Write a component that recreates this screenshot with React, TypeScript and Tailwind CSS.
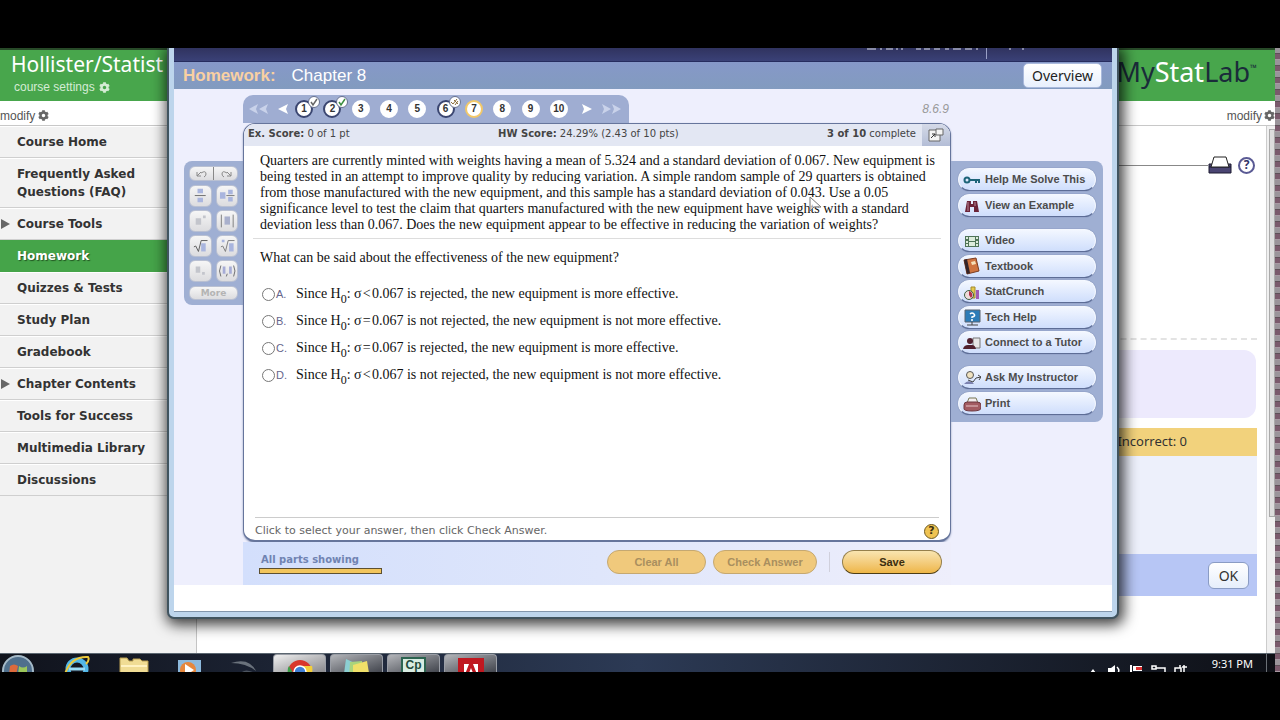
import type { ReactNode } from "react";
import clsx from "clsx";
import { FaCog } from "react-icons/fa";

const courseLinks = [
  { label: "Course Home" },
  { label: "Frequently Asked Questions (FAQ)", tall: true },
  { label: "Course Tools", arrow: true },
  { label: "Homework", active: true },
  { label: "Quizzes & Tests" },
  { label: "Study Plan" },
  { label: "Gradebook" },
  { label: "Chapter Contents", arrow: true },
  { label: "Tools for Success" },
  { label: "Multimedia Library" },
  { label: "Discussions" },
];

const problemLines = [
  "Quarters are currently minted with weights having a mean of 5.324 and a standard deviation of 0.067. New equipment is",
  "being tested in an attempt to improve quality by reducing variation. A simple random sample of 29 quarters is obtained",
  "from those manufactured with the new equipment, and this sample has a standard deviation of 0.043. Use a 0.05",
  "significance level to test the claim that quarters manufactured with the new equipment have weights with a standard",
  "deviation less than 0.067. Does the new equipment appear to be effective in reducing the variation of weights?",
];

const answers = [
  { id: "A", sign: "<", rest: "is rejected, the new equipment is more effective." },
  { id: "B", sign: "=", rest: "is not rejected, the new equipment is not more effective." },
  { id: "C", sign: "=", rest: "is rejected, the new equipment is more effective." },
  { id: "D", sign: "<", rest: "is not rejected, the new equipment is not more effective." },
];

const questions = [
  { n: 1, mark: "check" },
  { n: 2, mark: "check" },
  { n: 3 },
  { n: 4 },
  { n: 5 },
  { n: 6, mark: "partial" },
  { n: 7, current: true },
  { n: 8 },
  { n: 9 },
  { n: 10 },
];

function CourseSidebar() {
  return (
    <aside className="w-[197px] shrink-0 flex flex-col bg-[#f2f2f2] border-r border-[#c4c4c4]">
      <div className="h-[25px] pt-[5px] bg-white border-b border-[#c8c8c8] flex items-center text-[12px] text-[#555] font-['Liberation_Sans',sans-serif]">
        modify
        <FaCog className="ml-[3px] text-[#666]" size={11} />
      </div>
      <nav className="font-['DejaVu_Sans',sans-serif]">
        {courseLinks.map((link) => (
          <a
            key={link.label}
            href="#"
            className={clsx(
              "relative flex items-center pl-[17px] pr-[50px] border-b text-[12px] leading-[18px] font-bold",
              link.tall ? "h-[50px]" : "h-8",
              link.active
                ? "bg-[#45a449] text-white border-[#45a449] [text-shadow:1px_1px_1px_#225522]"
                : "text-[#333] border-[#cfcfcf] border-t border-t-white",
              !link.tall && "whitespace-nowrap"
            )}
          >
            {link.arrow && (
              <svg className="absolute left-[1px]" width="10" height="12" viewBox="0 0 10 12">
                <path d="M0 1l9 5-9 5z" fill="#666" />
              </svg>
            )}
            {link.label}
          </a>
        ))}
      </nav>
    </aside>
  );
}

function ResultsPage() {
  return (
    <main className="flex-1 bg-white flex flex-col font-['Noto_Sans',sans-serif]">
      <div className="h-[25px] pt-[5px] border-b border-[#c8c8c8] flex items-center justify-end text-[12px] text-[#555] font-['Liberation_Sans',sans-serif]">
        modify
        <FaCog className="ml-[2px] text-[#666]" size={11} />
      </div>
      <div className="flex-1 flex">
        <div className="flex-1 flex flex-col pr-[9px]">
          <div className="h-[214px] border-b-2 border-dashed border-[#e3e3e3] pt-[30px]">
            <div className="flex items-center gap-[6px]">
              <span className="flex-1 h-px bg-[#888]" />
              <svg width="24" height="18" viewBox="0 0 24 18" className="-ml-[6px]">
                <path d="M1 8h22v9H1z" fill="#4a4572" stroke="#1c1a30" />
                <path d="M1 11h22" stroke="#1c1a30" />
                <path d="M6 1h12l3 10H3z" fill="#fff" stroke="#222" />
              </svg>
              <button className="w-[17px] h-[17px] mr-[2px] rounded-full border-2 border-[#5a5a94] bg-white text-[12px] leading-[12px] font-bold text-[#333366]">
                ?
              </button>
            </div>
          </div>
          <div className="h-[68px] mt-[10px] mr-px bg-[#edeafd] rounded-xl" />
          <div className="h-7 mt-[10px] pr-[70px] bg-[#f2d27c] flex items-center justify-end text-[13px] text-[#333]">
            Incorrect: 0
          </div>
          <div className="h-[98px] bg-[#edf0fb]" />
          <div className="h-[42px] pr-2 bg-[#b7c6f5] flex items-center justify-end">
            <button className="w-[41px] h-[27px] rounded-[6px] border border-[#8a9cc4] bg-linear-to-b from-white to-[#e6eefb] text-[14px] text-[#333]">
              OK
            </button>
          </div>
        </div>
        <div className="w-[9px] border-l border-[#ccc] bg-[#f0f0f0] pt-[3px] pl-[2px]">
          <div className="h-[388px] border border-[#aaa] bg-[#dcdcdc]" />
        </div>
      </div>
    </main>
  );
}

const mathKeys: { label: string; art: ReactNode }[] = [
  {
    label: "Fraction",
    art: (
      <>
        <path d="M8 3h6v5H8zM8 13h6v5H8z" fill="#a9b5de" />
        <path d="M5 10.500h12" stroke="#666" />
      </>
    ),
  },
  {
    label: "Mixed number",
    art: (
      <>
        <path d="M3 7h6v7H3zM12 4h5v5h-5zM12 12h5v5h-5z" fill="#a9b5de" />
        <path d="M10 10.500h9" stroke="#777" />
      </>
    ),
  },
  { label: "Exponent", art: <path d="M6 8h6v7H6zM14 5h3v3h-3z" fill="#c3c5cc" /> },
  {
    label: "Absolute value",
    art: (
      <>
        <path d="M8 6h6v9H8z" fill="#a9b0cc" />
        <path d="M4.500 4v14M17.500 4v14" stroke="#777" />
      </>
    ),
  },
  {
    label: "Square root",
    art: (
      <>
        <path d="M12 8h5v9h-5z" fill="#a9b5de" />
        <path d="M4 12l2-1 3 6 3-12h7" stroke="#555" fill="none" />
      </>
    ),
  },
  {
    label: "Root",
    art: (
      <>
        <path d="M13 8h5v9h-5zM5 4h3v3H5z" fill="#a9b5de" />
        <path d="M4 12l2-1 3 6 3-12h7" stroke="#777" fill="none" />
      </>
    ),
  },
  { label: "Subscript", art: <path d="M6 6h5v7H6zM13 12h3v3h-3z" fill="#c3c5cc" /> },
  {
    label: "Ordered pair",
    art: (
      <>
        <path d="M6 6h3v8H6zM13 6h3v8h-3z" fill="#a6acd6" />
        <path d="M4 5q-3 6 0 12M18 5q3 6 0 12M11 14l-1 3" stroke="#666" fill="none" />
      </>
    ),
  },
];

const keyStyle = "border border-[#b9c0d2] bg-linear-to-b from-[#f6f6f6] to-[#dcdcdf]";

function MathPalette() {
  return (
    <div className="mt-[72px] ml-[10px] p-[5px] bg-[#9fafd3] rounded-l-lg flex flex-col gap-1">
      <div className={clsx("h-[15px] rounded-md flex", keyStyle)}>
        <button aria-label="Undo" className="flex-1 flex items-center justify-center border-r border-[#888]">
          <svg width="14" height="8" viewBox="0 0 14 8" fill="none" stroke="#888">
            <path d="M2 2v4h4M2 6l4-4M6 3q5-3 5 1 0 2-2 3" />
          </svg>
        </button>
        <button aria-label="Redo" className="flex-1 flex items-center justify-center">
          <svg width="14" height="8" viewBox="0 0 14 8" fill="none" stroke="#888">
            <path d="M12 2v4H8M12 6L8 2M8 3Q3 0 3 4q0 2 2 3" />
          </svg>
        </button>
      </div>
      <div className="grid grid-cols-2 gap-x-1 gap-y-[3px]">
        {mathKeys.map((key) => (
          <button key={key.label} aria-label={key.label} className={clsx("h-[22px] rounded-md", keyStyle)}>
            <svg viewBox="0 0 22 22" className="w-full h-full">
              {key.art}
            </svg>
          </button>
        ))}
      </div>
      <button
        className={clsx(
          "h-[14px] rounded-md text-[9px] leading-[12px] font-bold text-[#b4b4b4] font-['DejaVu_Sans',sans-serif]",
          keyStyle
        )}
      >
        More
      </button>
    </div>
  );
}

const helpGroups: { label: string; art: ReactNode }[][] = [
  [
    {
      label: "Help Me Solve This",
      art: (
        <g stroke="#1d6478" fill="none" strokeWidth="2">
          <circle cx="4" cy="9" r="2.500" />
          <path d="M6 9h11M13 9v3M16 9v3" />
        </g>
      ),
    },
    {
      label: "View an Example",
      art: (
        <>
          <path d="M4 4h4v3h2V4h4l2 11h-5v-5H7v5H2z" fill="#6b2338" />
          <path d="M5 5v9M12 5v4" stroke="#b98a97" />
        </>
      ),
    },
  ],
  [
    {
      label: "Video",
      art: (
        <>
          <path d="M2 4h14v11H2z" fill="#4f7458" />
          <path d="M6 5h6v4H6zM6 10h6v4H6zM3 5h2v2H3zM3 9h2v2H3zM3 12h2v2H3zM13 5h2v2h-2zM13 9h2v2h-2zM13 12h2v2h-2z" fill="#dcecdc" />
        </>
      ),
    },
    {
      label: "Textbook",
      art: (
        <>
          <path d="M1 3l12-2 3 13-12 3z" fill="#cf7440" stroke="#7a3c20" />
          <path d="M1 3l3-1 3 14-3 1z" fill="#33242a" />
          <path d="M8 5l4-1 1 3-4 1z" fill="#f6e0b8" />
        </>
      ),
    },
    {
      label: "StatCrunch",
      art: (
        <>
          <path d="M8 4h4v11H8z" fill="#e4c94c" stroke="#a28a2c" />
          <path d="M13 7h3v9h-3z" fill="#a05bb5" />
          <circle cx="6" cy="12" r="4.500" fill="#eedada" stroke="#3d5f42" />
          <path d="M6 12V8a4 4 0 0 1 2 7z" fill="#b3304a" />
        </>
      ),
    },
    {
      label: "Tech Help",
      art: (
        <>
          <path d="M2 2h15v12H2z" fill="#2d7cb8" stroke="#5a6470" />
          <path d="M4 17h11M9 14v3" stroke="#444" />
          <path d="M7 6q2-2 4 0t-2 3v1M9 11v2" stroke="#fff" fill="none" strokeWidth="1.500" />
        </>
      ),
    },
    {
      label: "Connect to a Tutor",
      art: (
        <>
          <path d="M10 4h7v10h-7z" fill="#e6e6e6" stroke="#777" />
          <circle cx="7" cy="7" r="3" fill="#50202e" />
          <path d="M0 15q1-4 5-4h4q3 0 4 4z" fill="#50202e" />
        </>
      ),
    },
  ],
  [
    {
      label: "Ask My Instructor",
      art: (
        <>
          <path d="M1 15q3-4 8-2l2 2z" fill="#7c82b0" />
          <circle cx="7" cy="6" r="3.500" fill="#f0e2c0" stroke="#555" />
          <path d="M5 11l5 2 3-4 5-1M15 6l3 2-2 3" stroke="#444" fill="none" />
        </>
      ),
    },
    {
      label: "Print",
      art: (
        <>
          <path d="M4 8l2-5h7l2 5z" fill="#f4eeee" stroke="#775" />
          <path d="M1 10q0-3 3-3h10q4 0 4 3v3q0 3-9 3t-8-3z" fill="#a35b62" stroke="#6e3840" />
          <path d="M3 11h12" stroke="#e6c4c6" />
        </>
      ),
    },
  ],
];

function HelpPalette() {
  return (
    <div className="mt-[72px] w-[152px] pt-[7px] pb-[7px] pl-[7px] pr-[7px] bg-[#9fafd3] rounded-r-lg flex flex-col gap-[12px]">
      {helpGroups.map((group, i) => (
        <div key={i} className={clsx("flex flex-col justify-between", group.length > 2 ? "h-[125px]" : "h-[49px]")}>
          {group.map((item) => (
            <button
              key={item.label}
              className="h-[23px] pl-1 flex items-center gap-1 rounded-full border border-[#f4f8ff] border-b-[#5d6d96] bg-linear-to-b from-[#f3f7ff] to-[#cfdefc] shadow-[0_0_1px_#50608c] text-[11px] font-bold text-[#4c4c4c] whitespace-nowrap font-['Liberation_Sans',sans-serif]"
            >
              <svg width="18" height="18" viewBox="0 0 18 18" className="shrink-0">
                {item.art}
              </svg>
              {item.label}
            </button>
          ))}
        </div>
      ))}
    </div>
  );
}

function QuestionTabs() {
  return (
    <div className="flex items-end justify-between h-[34px]">
      <div className="h-7 w-[386px] pl-[6px] pr-[7px] rounded-t-[10px] bg-[#9fadd2] flex items-center text-white">
        <button aria-label="First question" className="w-[25px]">
          <svg width="20" height="10" viewBox="0 0 20 10" fill="#c9d2ea">
            <path d="M0 5l9-5-2 5 2 5zM10 5l9-5-2 5 2 5z" />
          </svg>
        </button>
        <button aria-label="Previous question" className="w-4 pl-1">
          <svg width="10" height="10" viewBox="0 0 10 10" fill="#fff">
            <path d="M0 5l10-5-2 5 2 5z" />
          </svg>
        </button>
        <ol className="w-[283px] grid grid-cols-10">
          {questions.map((q) => (
            <li key={q.n} className="relative flex justify-center">
              <button
                className={clsx(
                  "w-[18px] h-[18px] rounded-full bg-white text-[10px] leading-[14px] font-bold text-[#333] font-['Liberation_Sans',sans-serif] border-2",
                  q.current && "border-[#f2c868]",
                  q.mark && "border-[#3a4570]",
                  !q.current && !q.mark && "border-white"
                )}
              >
                <span className="flex justify-center">{q.n}</span>
              </button>
              {q.mark && (
                <svg className="absolute -top-[4px] left-[18px]" width="12" height="12" viewBox="0 0 12 12">
                  <circle cx="6" cy="6" r="5.500" fill="#fff" stroke="#66708f" />
                  {q.mark === "check" ? (
                    <path d="M3 6l2 3 4-6" fill="none" stroke={q.n === 1 ? "#666" : "#3a8d3f"} strokeWidth="1.500" />
                  ) : (
                    <path d="M2 6l2 2 4-5M5 4l4 4M9 5L6 9" fill="none" stroke="#8a6d3a" />
                  )}
                </svg>
              )}
            </li>
          ))}
        </ol>
        <button aria-label="Next question" className="ml-auto">
          <svg width="10" height="10" viewBox="0 0 10 10" fill="#fff">
            <path d="M10 5L0 0l2 5-2 5z" />
          </svg>
        </button>
        <button aria-label="Last question" className="ml-[10px]">
          <svg width="20" height="10" viewBox="0 0 20 10" fill="#c9d2ea">
            <path d="M9 5L0 0l2 5-2 5zM19 5l-9-5 2 5-2 5z" />
          </svg>
        </button>
      </div>
      <span className="pb-[5px] pr-[2px] text-[12px] italic text-[#999] font-['Liberation_Sans',sans-serif]">8.6.9</span>
    </div>
  );
}

function QuestionCard() {
  return (
    <section className="flex-1 flex flex-col bg-white border border-[#66759c] border-b-2 rounded-xl overflow-hidden shadow-[0_1px_2px_#8894b4]">
      <header className="h-[22px] pb-[3px] pl-1 bg-[#e3e7f3] flex items-center justify-between text-[10px] text-[#444] font-['DejaVu_Sans',sans-serif]">
        <span>
          <b>Ex. Score:</b> 0 of 1 pt
        </span>
        <span>
          <b>HW Score:</b> 24.29% (2.43 of 10 pts)
        </span>
        <span className="flex items-center gap-[6px] h-[22px]">
          <span>
            <b>3 of 10</b> complete
          </span>
          <button aria-label="Pop out" className="w-7 h-full -mb-[3px] flex items-center justify-center bg-linear-to-b from-[#d5dae8] to-[#b3bdd6]">
            <svg width="16" height="14" viewBox="0 0 16 14" fill="#f4f4f4" stroke="#666">
              <path d="M1 2h11v11H1z" />
              <path d="M8 1h7v6H8z" />
              <path d="M3 10l4-4M4 6h3v3" fill="none" stroke="#333" />
            </svg>
          </button>
        </span>
      </header>
      <div className="flex-1 px-[9px] flex flex-col font-['Liberation_Serif',serif] text-[14px] text-[#111]">
        <p className="pt-[7px] pb-[5px] pl-[7px] leading-4 border-b border-[#ddd] whitespace-nowrap">
          {problemLines.map((line) => (
            <span key={line} className="block">
              {line}
            </span>
          ))}
        </p>
        <p className="mt-[11px] pl-[7px] leading-4">What can be said about the effectiveness of the new equipment?</p>
        <div className="mt-[14px] pl-[9px]">
          {answers.map((a) => (
            <label key={a.id} className="h-[27px] flex items-center whitespace-nowrap">
              <input
                type="radio"
                name="answer"
                className="appearance-none w-[13px] h-[13px] mt-[2px] rounded-full border border-[#777] bg-white"
              />
              <span className="w-5 mt-[2px] ml-[1px] text-[11px] text-[#66668c] font-['Liberation_Sans',sans-serif]">{a.id}.</span>
              <span className="leading-4">
                Since H<sub className="text-[12px] -bottom-[5px]">0</sub>: σ{"\u200a"}
                {a.sign}
                {"\u200a"}0.067 {a.rest}
              </span>
            </label>
          ))}
        </div>
        <div className="mt-auto h-[23px] pt-1 mx-[2px] flex items-center justify-between border-t border-[#ccc] text-[11px] text-[#666] font-['DejaVu_Sans',sans-serif]">
          Click to select your answer, then click Check Answer.
          <button className="w-[15px] h-[15px] rounded-full border border-[#6e5a22] bg-[#efc352] text-[11px] leading-[12px] font-bold text-[#3c3010]">
            ?
          </button>
        </div>
      </div>
    </section>
  );
}

const goldButton = "h-[24px] rounded-full border text-[11px] font-bold font-['Liberation_Sans',sans-serif]";

function ActionBar() {
  return (
    <div className="h-[43px] pl-4 pr-[9px] flex items-center justify-between bg-linear-to-r from-[#d3dffc] via-[#dfe6fb] to-[#eeeefb]">
      <div className="w-[123px] text-[10px] leading-[12px] font-bold text-[#7083b2] font-['DejaVu_Sans',sans-serif]">
        <span className="pl-[2px]">All parts showing</span>
        <div className="mt-[2px] h-[6px] border border-[#5d5030] bg-[#f2c55c]" />
      </div>
      <div className="flex items-center gap-[7px] pb-[3px]">
        <button disabled className={clsx(goldButton, "w-[99px] bg-[#f0c97c] border-[#c5a871] text-[#a98f5f]")}>
          Clear All
        </button>
        <button disabled className={clsx(goldButton, "w-[104px] bg-[#f0c97c] border-[#c5a871] text-[#a98f5f]")}>
          Check Answer
        </button>
        <span className="w-px h-5 mx-[5px] bg-[#d0d0dc]" />
        <button className={clsx(goldButton, "w-[100px] bg-linear-to-b from-[#f9e5b0] to-[#eeb645] border-[#96804c] border-b-[#4c3c14] text-[#3c2e10]")}>
          Save
        </button>
      </div>
    </div>
  );
}

function HomeworkWindow() {
  return (
    <div className="absolute top-0 bottom-[53px] left-[167px] right-[161px] flex flex-col rounded-b-[7px] border-2 border-t-0 border-[#41545f] bg-[#bdd5ec] px-[5px] pb-[5px] shadow-[2px_3px_14px_3px_rgba(0,0,0,0.75)]">
      <div className="flex-1 flex flex-col bg-white border-b border-[#8296ac]">
        <div className="relative h-[14px] bg-linear-to-b from-[#30335f] to-[#3a4177] border-b border-[#262c5e] overflow-hidden">
          <svg className="absolute right-[75px] top-0" width="170" height="14" viewBox="0 0 170 14">
            <path d="M0 1h9M13 1h2M19 1h7M29 1h2M34 1h2M49 1h5M57 1h6M67 1h6M78 1h4M86 1h8M98 1h7M109 1h2M142 1h2M155 1h2" stroke="#dfe2f0" />
            <path d="M119.500 0v11" stroke="#9aa0c6" />
          </svg>
        </div>
        <header className="h-[27px] pl-[9px] pr-[10px] flex items-center bg-linear-to-b from-[#8698c8] to-[#829bbf] text-[17px] font-['Liberation_Sans',sans-serif]">
          <h1 className="font-bold text-[#f9d0a2]">Homework:</h1>
          <span className="ml-4 text-white">Chapter 8</span>
          <button className="ml-auto w-[79px] h-[25px] rounded-[5px] border border-[#a9b9dc] bg-linear-to-b from-white to-[#e8f0fd] text-[14px] leading-[22px] text-[#222] font-['Noto_Sans',sans-serif]">
            Overview
          </button>
        </header>
        <div className="flex-1 flex bg-[#eeeffd]">
          <div className="w-[69px]">
            <MathPalette />
          </div>
          <div className="flex-1 flex flex-col">
            <QuestionTabs />
            <QuestionCard />
            <ActionBar />
          </div>
          <div className="w-[161px]">
            <HelpPalette />
          </div>
        </div>
        <div className="h-[26px]" />
      </div>
    </div>
  );
}

const runningApps = [
  {
    label: "Chrome",
    art: (
      <>
        <circle cx="14" cy="15" r="12" fill="#d9372c" />
        <path d="M3 9l6 10v8Q0 22 2 11z" fill="#3c9f47" />
        <path d="M14 9h12q2 9-6 17l-6-4z" fill="#f3cf3b" />
        <circle cx="14" cy="15" r="6" fill="#3f7fd6" stroke="#fff" strokeWidth="1.500" />
      </>
    ),
  },
  {
    label: "Sticky Notes",
    art: (
      <>
        <path d="M3 2l13 6-4 16H0z" fill="#8ccfd2" />
        <path d="M7 5l12-1v20H6z" fill="#a9d47c" />
        <path d="M10 8l14-4 3 18H10z" fill="#f0e069" />
      </>
    ),
  },
  { label: "Captivate", short: "Cp" },
  {
    label: "Adobe Reader",
    art: (
      <>
        <path d="M1 1h26v27H1z" fill="#c01820" />
        <path d="M7 20V7h5L7 20zM21 20V7h-5l5 13zM14 11l4 10h-8z" fill="#fff" />
      </>
    ),
  },
];

function Taskbar() {
  return (
    <footer className="h-[19px] shrink-0 flex items-start overflow-hidden border-t border-[#5b6670] bg-linear-to-r from-[#10131c] via-[#2c3a55] to-[#0e1016] text-white">
      <div className="flex items-start pl-[1px] w-[273px] justify-between pr-4">
        <button aria-label="Start">
          <svg width="34" height="20" viewBox="0 0 34 20">
            <circle cx="17" cy="17" r="15" fill="#4f6f8c" stroke="#a5bac8" strokeWidth="2" />
            <path d="M9 12q4-3 8 0l-2 9H8z" fill="#dd6a3c" />
            <path d="M18 12q4 3 8 0v9h-9z" fill="#9cc75a" />
          </svg>
        </button>
        <button aria-label="Internet Explorer">
          <svg width="28" height="20" viewBox="0 0 28 20" fill="none">
            <circle cx="14" cy="15" r="9" stroke="#52b8e8" strokeWidth="5" />
            <path d="M6 15h16" stroke="#9adcf6" strokeWidth="3" />
            <path d="M2 20Q8 2 25 3q2 3-2 7" stroke="#edc93c" strokeWidth="2" />
          </svg>
        </button>
        <button aria-label="Explorer">
          <svg width="30" height="20" viewBox="0 0 30 20">
            <path d="M1 7V4h7l2 3h4V5h7l2 2h6v14H1z" fill="#f0dc94" stroke="#b89d50" />
            <path d="M2 12h26" stroke="#fff2c2" strokeWidth="2" />
          </svg>
        </button>
        <button aria-label="Media Player">
          <svg width="26" height="20" viewBox="0 0 26 20">
            <path d="M1 6h23v14H1z" fill="#8db9dc" />
            <circle cx="11" cy="16" r="8" fill="#e6873c" />
            <path d="M8 10l9 6-9 6z" fill="#fff" />
          </svg>
        </button>
        <button aria-label="Audio">
          <svg width="26" height="20" viewBox="0 0 26 20">
            <path d="M0 9q18-6 25 8-10-8-25-8z" fill="#6a727c" />
            <path d="M10 19q4-5 14 0v1H10z" fill="#4d5560" />
          </svg>
        </button>
      </div>
      <div className="flex gap-1">
        {runningApps.map((app, i) => (
          <button
            key={app.label}
            aria-label={app.label}
            className={clsx(
              "h-[18px] w-[53px] pt-[2px] flex justify-center overflow-hidden rounded-t-sm border border-b-0 border-[#9a9ea6]",
              i === 0 ? "bg-linear-to-br from-[#f0f0f0] to-[#8a8a8e]" : "bg-linear-to-br from-[#b4b6ba] to-[#43464e]"
            )}
          >
            {app.short ? (
              <span className="w-[25px] h-[15px] border-2 border-b-0 border-[#2c6450] bg-[#d8ece2] text-[12px] leading-[13px] font-bold text-[#1f4b3c] font-['Liberation_Sans',sans-serif]">
                {app.short}
              </span>
            ) : (
              <svg width="28" height="28" viewBox="0 0 28 28" className="shrink-0">
                {app.art}
              </svg>
            )}
          </button>
        ))}
      </div>
      <div className="ml-auto flex items-start">
        <svg width="100" height="19" viewBox="0 0 100 19" fill="#fff" className="mr-[22px]">
          <path d="M3 15l-3 4h6zM18 14h3l4-3v8h-7zM40 11h2v8h-2zM43 12h9v5h-9z" />
          <path d="M46 13h6v3h-6z" fill="#d33" />
          <path d="M27 13q3 3 1 6M62 12h4v3h-4zM66 14h9v5h-9M85 14h6v5h-6zM92 13h5M90 11v3M94 11v8" fill="none" stroke="#fff" strokeWidth="1.500" />
        </svg>
        <time className="pt-[2px] text-[11px] leading-[16px] font-['Noto_Sans',sans-serif] whitespace-nowrap">9:31 PM</time>
        <span className="ml-[13px] w-[9px] h-[18px] border-l border-[#6b7076]" />
      </div>
    </footer>
  );
}

export default function App() {
  return (
    <div className="h-screen flex flex-col bg-black py-12">
      <div className="relative flex-1 flex overflow-hidden">
        <div className="flex-1 flex flex-col">
          <header className="h-[53px] shrink-0 border-t-2 border-[#274a28] bg-[#48a64c] flex justify-between pl-[11px] pr-[18px] text-white">
            <div>
              <h2 className="text-[21px] leading-[28px] font-['Noto_Sans',sans-serif]">Hollister/Statist</h2>
              <a href="#" className="ml-[3px] flex items-center gap-1 text-[12px] leading-[18px] text-[#d5ecd5] font-['Liberation_Sans',sans-serif]">
                course settings
                <FaCog size={11} />
              </a>
            </div>
            <div className="pt-[6px] flex text-[27px] leading-[32px] text-[#1a2c3a] font-['Noto_Sans',sans-serif]">
              My<span className="text-white">Stat</span>Lab<span className="text-[9px] leading-[24px]">™</span>
            </div>
          </header>
          <div className="flex-1 flex">
            <CourseSidebar />
            <ResultsPage />
          </div>
          <Taskbar />
        </div>
        <div className="w-[5px] bg-[repeating-linear-gradient(#9a949a_0_5px,#5f5058_5px_6px,#7a5a6c_6px_11px,#a898a2_11px_12px)]" />
        <HomeworkWindow />
        <svg className="absolute left-[809px] top-[148px]" width="14" height="20" viewBox="0 0 14 20">
          <path d="M1 1v14l4-4h7z" fill="#fff" fillOpacity="0.600" stroke="#777" />
        </svg>
      </div>
    </div>
  );
}
